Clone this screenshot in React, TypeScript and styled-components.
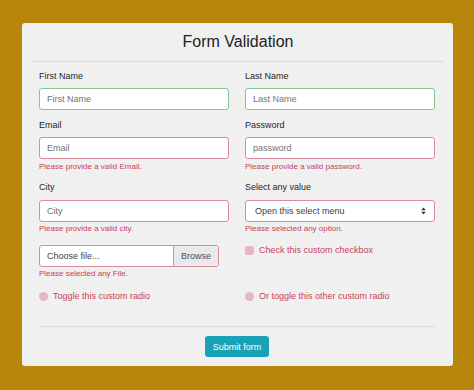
import React from "react";
import styled, { createGlobalStyle, css } from "styled-components";

const Global = createGlobalStyle`
  html, body { margin: 0; padding: 0; }
  body {
    background: #b8860b;
    font-family: "Liberation Sans", Arial, sans-serif;
    width: 474px;
    height: 390px;
    overflow: hidden;
  }
  * { box-sizing: border-box; }
`;

const Page = styled.div`
  padding: 23px 21px 0 22px;
`;

const Card = styled.form`
  background: #f0f0f0;
  border-radius: 3px;
  width: 431px;
  height: 343px;
  display: flex;
  flex-direction: column;
`;

const Header = styled.div`
  margin: 0 9px 0 10px;
  padding: 9px 0 10px;
  border-bottom: 1px solid #dcdcdc;
  text-align: center;
`;

const Title = styled.h1`
  margin: 0;
  font-size: 16px;
  line-height: 19px;
  font-weight: 400;
  color: #222;
`;

const Body = styled.div`
  padding: 7.5px 18px 0 17px;
  display: grid;
  grid-template-columns: 190px 190px;
  column-gap: 16px;
  row-gap: 8.5px;
`;

const Field = styled.div<{ $offset?: number }>`
  display: flex;
  flex-direction: column;
  margin-top: ${(p) => p.$offset ?? 0}px;
`;

const Label = styled.label`
  font-size: 9px;
  line-height: 13.5px;
  color: #262626;
  margin-bottom: 5px;
`;

type Status = "valid" | "invalid";

const fieldBox = css<{ $status: Status }>`
  height: 22px;
  border-radius: 3px;
  border: 1px solid ${(p) => (p.$status === "valid" ? "#86c596" : "#d98c99")};
  background: #ffffff;
  font-family: "Liberation Sans", Arial, sans-serif;
  font-size: 9px;
`;

const Input = styled.input<{ $status: Status }>`
  ${fieldBox};
  width: 100%;
  padding: 0 7px;
  color: #495057;
  outline: none;
  &::placeholder {
    color: #737373;
  }
`;

const SelectBox = styled.div<{ $status: Status }>`
  ${fieldBox};
  display: flex;
  align-items: center;
  justify-content: space-between;
  padding: 0 8px 0 9px;
  color: #3a3f44;
`;

const FileBox = styled.div<{ $status: Status }>`
  ${fieldBox};
  width: 180px;
  display: flex;
  overflow: hidden;
`;

const FileText = styled.span`
  flex: 1;
  display: flex;
  align-items: center;
  padding-left: 7px;
  color: #444;
`;

const Browse = styled.span`
  width: 45px;
  display: flex;
  align-items: center;
  justify-content: center;
  background: #e9e9ec;
  border-left: 1px solid #d98c99;
  color: #495057;
`;

const Feedback = styled.div`
  margin-top: 1.5px;
  font-size: 8px;
  line-height: 12px;
  color: #c8405a;
`;

const Check = styled.label`
  display: flex;
  align-items: center;
  gap: 5px;
  font-size: 9px;
  line-height: 13.5px;
  color: #c8405a;
`;

const Indicator = styled.span<{ $round?: boolean }>`
  width: 9px;
  height: 9px;
  flex: none;
  background: #e9b5c1;
  border-radius: ${(p) => (p.$round ? "50%" : "2px")};
`;

const Footer = styled.div`
  margin: auto 18px 0 17px;
  border-top: 1px solid #dcdcdc;
  padding: 9.5px 0 9px;
  display: flex;
  justify-content: center;
`;

const Button = styled.button`
  height: 21px;
  padding: 0 7.5px;
  border: none;
  border-radius: 3px;
  background: #17a2b8;
  color: #ffffff;
  font-family: "Liberation Sans", Arial, sans-serif;
  font-size: 9px;
  cursor: pointer;
`;

const Arrows = () => (
  <svg width="5" height="8" viewBox="0 0 5 8">
    <path d="M2.5 0.5 L4.8 3.3 H0.2 Z M2.5 7.5 L4.8 4.7 H0.2 Z" fill="#343a40" />
  </svg>
);

export default function App() {
  return (
    <>
      <Global />
      <Page>
        <Card onSubmit={(e) => e.preventDefault()}>
          <Header>
            <Title>Form Validation</Title>
          </Header>
          <Body>
            <Field>
              <Label>First Name</Label>
              <Input $status="valid" placeholder="First Name" />
            </Field>
            <Field>
              <Label>Last Name</Label>
              <Input $status="valid" placeholder="Last Name" />
            </Field>

            <Field>
              <Label>Email</Label>
              <Input $status="invalid" placeholder="Email" />
              <Feedback>Please provide a valid Email.</Feedback>
            </Field>
            <Field>
              <Label>Password</Label>
              <Input $status="invalid" type="password" placeholder="password" />
              <Feedback>Please provide a valid password.</Feedback>
            </Field>

            <Field>
              <Label>City</Label>
              <Input $status="invalid" placeholder="City" />
              <Feedback>Please provide a valid city.</Feedback>
            </Field>
            <Field>
              <Label>Select any value</Label>
              <SelectBox $status="invalid">
                <span>Open this select menu</span>
                <Arrows />
              </SelectBox>
              <Feedback>Please selected any option.</Feedback>
            </Field>

            <Field $offset={1}>
              <FileBox $status="invalid">
                <FileText>Choose file...</FileText>
                <Browse>Browse</Browse>
              </FileBox>
              <Feedback>Please selected any File.</Feedback>
            </Field>
            <Field>
              <Check>
                <Indicator />
                Check this custom checkbox
              </Check>
            </Field>

            <Field $offset={1}>
              <Check>
                <Indicator $round />
                Toggle this custom radio
              </Check>
            </Field>
            <Field $offset={1}>
              <Check>
                <Indicator $round />
                Or toggle this other custom radio
              </Check>
            </Field>
          </Body>
          <Footer>
            <Button type="submit">Submit form</Button>
          </Footer>
        </Card>
      </Page>
    </>
  );
}
